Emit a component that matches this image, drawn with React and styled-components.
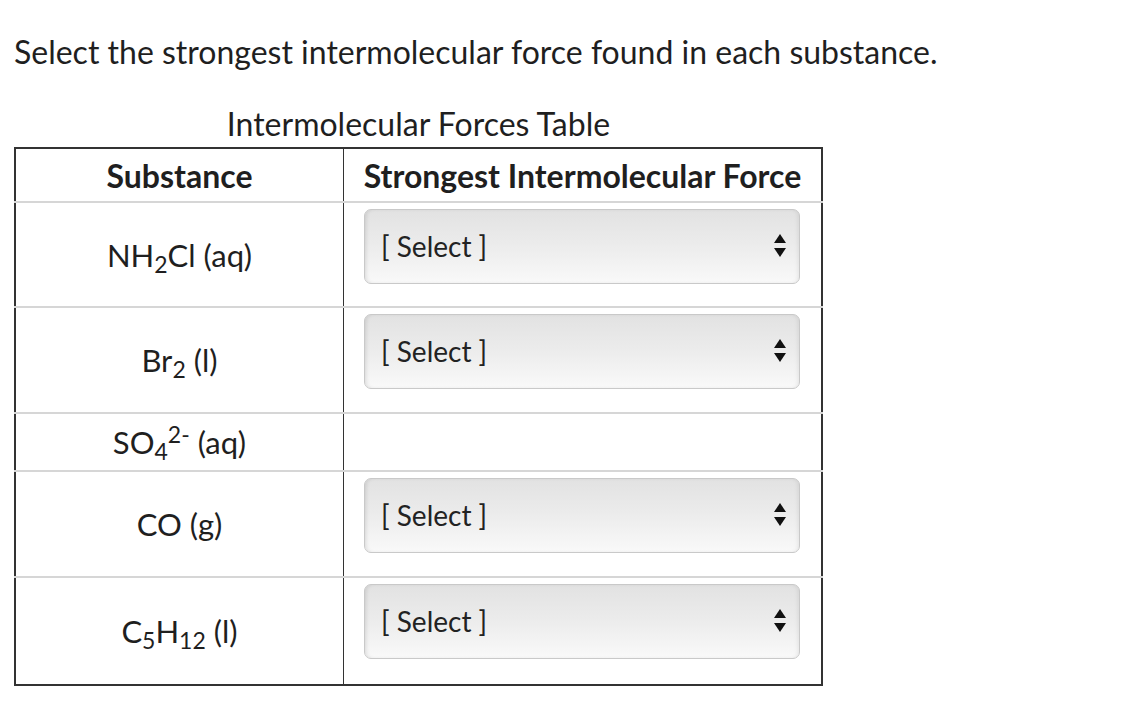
import styled, { createGlobalStyle } from "styled-components";

const GlobalStyle = createGlobalStyle`
    body {
        margin: 0;
        background: #ffffff;
        font-family: Lato, "Open Sans", sans-serif;
        color: #1f1f1f;
    }
`;

const Page = styled.div`
    padding: 31px 0 0 14px;
`;

const Prompt = styled.p`
    margin: 0 0 0 0;
    font-size: 32px;
    line-height: 42px;
`;

const Table = styled.table`
    margin-top: 32px;
    width: 809px;
    border-collapse: collapse;
    border: 2px solid #333333;
`;

const Caption = styled.caption`
    font-size: 32px;
    line-height: 38px;
    padding-bottom: 4px;
`;

const HeadCell = styled.th`
    height: 52px;
    padding: 0;
    font-size: 32px;
    font-weight: 700;
    text-align: center;
    vertical-align: middle;
    border-left: 1px solid #333333;
    &:first-child {
        border-left: none;
        width: 327px;
    }
`;

const Row = styled.tr`
    height: ${(p) => p.$h}px;
    border-top: 2px solid #d6d6d6;
`;

const Substance = styled.td`
    padding: 0;
    font-size: 31px;
    text-align: center;
    vertical-align: middle;

    sub, sup {
        font-size: 23px;
        line-height: 0;
    }
    sub {
        vertical-align: -6px;
    }
    sup {
        vertical-align: 11px;
    }
`;

const AnswerCell = styled.td`
    padding: 6px 21px 0 20px;
    vertical-align: top;
    border-left: 1px solid #333333;
`;

const Select = styled.div`
    box-sizing: border-box;
    height: 75px;
    display: flex;
    align-items: center;
    justify-content: space-between;
    padding: 0 12px 2px 16px;
    border: 1px solid #c9c9c9;
    border-radius: 7px;
    background: linear-gradient(to bottom, #e2e2e2 0%, #ebebeb 45%, #f9f9f9 100%);
    box-shadow: inset 3px 0 4px -2px rgba(0, 0, 0, 0.12), inset -3px 0 4px -2px rgba(0, 0, 0, 0.08);
    font-size: 28px;
    color: #222222;
`;

const Arrows = () => (
    <svg width="14" height="24" viewBox="0 0 14 24">
        <polygon points="7,0 13,9 1,9" fill="#111" />
        <polygon points="1,14 13,14 7,23" fill="#111" />
    </svg>
);

const rows = [
    { h: 105, name: <>NH<sub>2</sub>Cl (aq)</>, select: true },
    { h: 106, name: <>Br<sub>2</sub> (l)</>, select: true },
    { h: 58, name: <>SO<sub>4</sub><sup>2-</sup> (aq)</>, select: false },
    { h: 106, name: <>CO (g)</>, select: true },
    { h: 108, name: <>C<sub>5</sub>H<sub>12</sub> (l)</>, select: true },
];

const App = () => {
    return (
        <>
            <GlobalStyle />
            <Page>
                <Prompt>Select the strongest intermolecular force found in each substance.</Prompt>
                <Table>
                    <Caption>Intermolecular Forces Table</Caption>
                    <thead>
                        <tr>
                            <HeadCell>Substance</HeadCell>
                            <HeadCell>Strongest Intermolecular Force</HeadCell>
                        </tr>
                    </thead>
                    <tbody>
                        {rows.map((r, i) => (
                            <Row key={i} $h={r.h}>
                                <Substance>{r.name}</Substance>
                                <AnswerCell>
                                    {r.select && (
                                        <Select>
                                            <span>[ Select ]</span>
                                            <Arrows />
                                        </Select>
                                    )}
                                </AnswerCell>
                            </Row>
                        ))}
                    </tbody>
                </Table>
            </Page>
        </>
    );
};

export default App;
